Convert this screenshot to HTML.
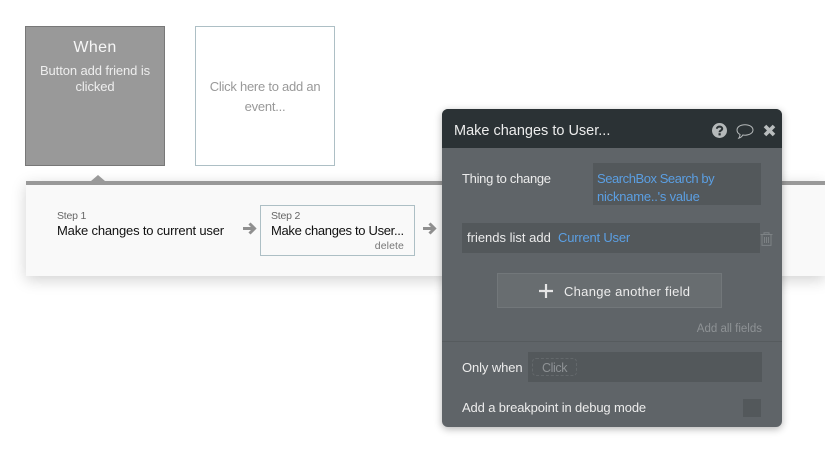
<!DOCTYPE html>
<html>
<head>
<meta charset="utf-8">
<style>
html,body{margin:0;padding:0;background:#fff}
body{width:825px;height:471px;overflow:hidden;position:relative;font-family:"Liberation Sans",sans-serif;font-size:13px}
.a{position:absolute;box-sizing:border-box}
.t{position:absolute;white-space:nowrap;line-height:16px}
.c{text-align:center}
svg{position:absolute;overflow:visible}
</style>
</head>
<body>
<div class="a" style="left:25px;top:26px;width:140px;height:140px;background:#999;border:1px solid #787878"></div>
<div class="t c" style="left:25px;width:140px;top:39px;font-size:16px;line-height:18px;color:#f6f6f6;letter-spacing:.35px">When</div>
<div class="t c" style="left:25px;width:140px;top:63px;color:#eee;letter-spacing:-.1px">Button add friend is</div>
<div class="t c" style="left:25px;width:140px;top:79px;color:#eee;letter-spacing:-.1px">clicked</div>

<div class="a" style="left:195px;top:26px;width:140px;height:140px;background:#fff;border:1px solid #adbfc5"></div>
<div class="t c" style="left:195px;width:140px;top:79px;color:#999;letter-spacing:-.25px">Click here to add an</div>
<div class="t c" style="left:195px;width:140px;top:99px;color:#999;letter-spacing:-.25px">event...</div>

<div class="a" style="left:26px;top:181px;width:799px;height:95px;background:#f9f9f9;box-shadow:0 4px 14px rgba(0,0,0,.18)"></div>
<div class="a" style="left:26px;top:181px;width:799px;height:4px;background:#999"></div>
<svg style="left:0;top:0" width="825" height="471"><path d="M91 181L98 175L105 181Z" fill="#999"/></svg>

<div class="t" style="left:57px;top:208px;font-size:10.5px;color:#666;letter-spacing:-.2px">Step 1</div>
<div class="t" style="left:57px;top:223px;color:#111;letter-spacing:-.18px">Make changes to current user</div>
<svg style="left:242px;top:221px" width="15" height="15" viewBox="0 0 15 15"><path d="M1 7.5H11.5M7.5 2.5L12.5 7.5L7.5 12.5" fill="none" stroke="#8f8f8f" stroke-width="3"/></svg>

<div class="a" style="left:260px;top:205px;width:155px;height:51px;border:1px solid #adbfc5"></div>
<div class="t" style="left:271px;top:208px;font-size:10.5px;color:#666;letter-spacing:-.2px">Step 2</div>
<div class="t" style="left:271px;top:223px;color:#111;letter-spacing:-.32px">Make changes to User...</div>
<div class="t" style="right:421px;top:238px;font-size:10.5px;color:#777;letter-spacing:.1px">delete</div>
<svg style="left:422px;top:221px" width="15" height="15" viewBox="0 0 15 15"><path d="M1 7.5H11.5M7.5 2.5L12.5 7.5L7.5 12.5" fill="none" stroke="#8f8f8f" stroke-width="3"/></svg>

<div class="a" style="left:442px;top:109px;width:340px;height:318px;background:#5f6468;border-radius:6px;box-shadow:0 2px 8px rgba(0,0,0,.3);overflow:hidden">
  <div class="a" style="left:0;top:0;width:340px;height:39px;background:#2b3235"></div>
</div>
<div class="t" style="left:454px;top:122px;font-size:14.5px;line-height:18px;color:#ececec">Make changes to User...</div>
<svg style="left:712px;top:123px" width="15" height="15" viewBox="0 0 15 15"><circle cx="7.5" cy="7.5" r="7.5" fill="#b5b9ba"/><path d="M4.9 5.8C4.9 2.9 10.2 2.9 10.2 5.8C10.2 7.6 7.6 7.4 7.6 9.2" fill="none" stroke="#2b3235" stroke-width="2"/><rect x="6.5" y="10.2" width="2.2" height="2.2" fill="#2b3235"/></svg>
<svg style="left:736px;top:124px" width="18" height="16" viewBox="0 0 18 16"><path d="M9 .7C13.5.7 17 3 17 6C17 9 13.5 11.2 9 11.2C8.2 11.2 7.5 11.1 6.8 11C6 12.5 4.5 13.7 2.8 14.2C3.6 13 4.1 11.8 4 10.4C2 9.4 1 7.8 1 6C1 3 4.5.7 9 .7Z" fill="none" stroke="#b5b9ba" stroke-width="1"/></svg>
<svg style="left:763px;top:124px" width="13" height="13" viewBox="0 0 13 13"><path d="M2 2L11 11M11 2L2 11" stroke="#b9bdbe" stroke-width="3.6" fill="none"/></svg>

<div class="t" style="left:462px;top:171px;color:#ececec;letter-spacing:-.3px">Thing to change</div>
<div class="a" style="left:593px;top:163px;width:168px;height:42px;background:#53585b"></div>
<div class="t" style="left:597px;top:171px;color:#5b9fe3;letter-spacing:-.45px">SearchBox Search by</div>
<div class="t" style="left:597px;top:189px;color:#5b9fe3;letter-spacing:-.22px">nickname..'s value</div>

<div class="a" style="left:462px;top:223px;width:298px;height:30px;background:#53585b"></div>
<div class="t" style="left:467px;top:230px;color:#ececec">friends list add</div>
<div class="t" style="left:558px;top:230px;color:#5b9fe3;letter-spacing:-.2px">Current User</div>
<svg style="left:760px;top:232px" width="13" height="14" viewBox="0 0 13 14"><path d="M.5 2.5H12.5M4 2.5V.8H9V2.5M2 2.5V13.4H11V2.5M4.5 5V11M6.5 5V11M8.5 5V11" fill="none" stroke="#7d8285" stroke-width="1"/></svg>

<div class="a" style="left:497px;top:273px;width:225px;height:35px;background:#686d70;border:1px solid #72777a"></div>
<svg style="left:539px;top:284px" width="14" height="14" viewBox="0 0 14 14"><path d="M7 0V14M0 7H14" stroke="#e6e6e6" stroke-width="2.2"/></svg>
<div class="t" style="left:564px;top:284px;color:#ececec;letter-spacing:.28px">Change another field</div>
<div class="t" style="right:63px;top:321px;font-size:11.5px;color:#8e9295">Add all fields</div>
<div class="a" style="left:442px;top:341px;width:340px;height:1px;background:#565b5e"></div>

<div class="t" style="left:462px;top:360px;color:#ececec;letter-spacing:-.1px">Only when</div>
<div class="a" style="left:528px;top:352px;width:234px;height:30px;background:#53585b"></div>
<div class="a" style="left:532px;top:358px;width:45px;height:18px;border:1px dashed #63686b;border-radius:4px"></div>
<div class="t" style="left:542px;top:360px;font-size:12.5px;color:#8e9295;letter-spacing:-.4px">Click</div>
<div class="t" style="left:462px;top:400px;color:#ececec;letter-spacing:-.13px">Add a breakpoint in debug mode</div>
<div class="a" style="left:743px;top:399px;width:18px;height:18px;background:#53585b"></div>
</body>
</html>
